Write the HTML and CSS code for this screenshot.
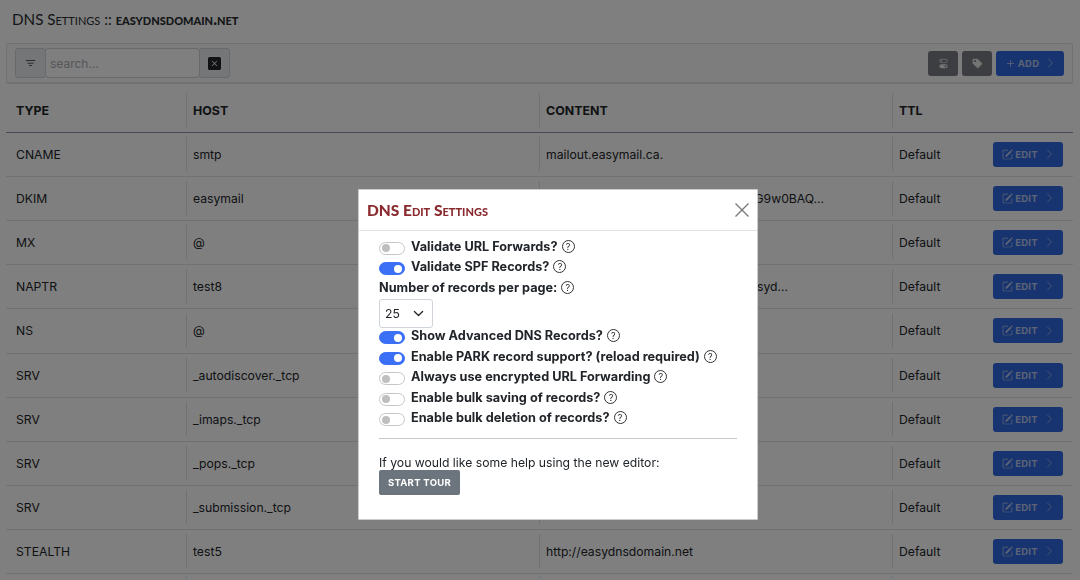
FILE: index.html
```html
<!DOCTYPE html>
<html lang="en">

<head>
    <meta charset="UTF-8">
    <title>DNS Settings</title>
    <link rel="stylesheet" href="styles.css">
</head>

<body>
    <h1 class="page-title">DNS Settings :: <b>easydnsdomain.net</b></h1>

    <div class="toolbar">
        <div class="search">
            <button class="search-filter">
                <svg width="13" height="13" viewBox="0 0 16 16" fill="currentColor"><path d="M6 10.5a.5.5 0 0 1 .5-.5h3a.5.5 0 0 1 0 1h-3a.5.5 0 0 1-.5-.5zm-2-3a.5.5 0 0 1 .5-.5h7a.5.5 0 0 1 0 1h-7a.5.5 0 0 1-.5-.5zm-2-3a.5.5 0 0 1 .5-.5h11a.5.5 0 0 1 0 1h-11a.5.5 0 0 1-.5-.5z"/></svg>
            </button>
            <input class="search-input" type="text" placeholder="search...">
            <button class="search-clear">
                <svg width="13" height="13" viewBox="0 0 16 16" fill="currentColor"><path d="M2 0a2 2 0 0 0-2 2v12a2 2 0 0 0 2 2h12a2 2 0 0 0 2-2V2a2 2 0 0 0-2-2H2zm3.35 4.65L8 7.29l2.65-2.64.7.7L8.71 8l2.64 2.65-.7.7L8 8.71l-2.65 2.64-.7-.7L7.29 8 4.65 5.35l.7-.7z"/></svg>
            </button>
        </div>
        <div class="actions">
            <button class="btn btn-dark">
                <svg width="11" height="11" viewBox="0 0 16 16" fill="currentColor"><path d="M5 1h6a3 3 0 0 1 0 6H5a3 3 0 0 1 0-6zm0 1a2 2 0 0 0 0 4h6a2 2 0 0 0 0-4H5zm0 1a1 1 0 1 1 0 2 1 1 0 0 1 0-2zM5 9h6a3 3 0 0 1 0 6H5a3 3 0 0 1 0-6zm6 4.5a1.5 1.5 0 1 0 0-3 1.5 1.5 0 0 0 0 3z"/></svg>
            </button>
            <button class="btn btn-dark">
                <svg width="11" height="11" viewBox="0 0 16 16" fill="currentColor"><path d="M1 2a1 1 0 0 1 1-1h5.6a1 1 0 0 1 .7.3l6.4 6.4a1 1 0 0 1 0 1.4l-5.6 5.6a1 1 0 0 1-1.4 0L1.3 8.3a1 1 0 0 1-.3-.7V2zm3.5 4a1.5 1.5 0 1 0 0-3 1.5 1.5 0 0 0 0 3z"/></svg>
            </button>
            <button class="btn btn-blue btn-add">
                <svg width="11" height="11" viewBox="0 0 16 16" fill="none" stroke="currentColor" stroke-width="1.2"><path d="M8 3v10M3 8h10"/></svg>
                <span>ADD</span>
                <svg class="chev" width="10" height="10" viewBox="0 0 16 16" fill="none" stroke="currentColor" stroke-width="1.4"><path d="M5 1l7 7-7 7"/></svg>
            </button>
        </div>
    </div>

    <table class="records">
        <thead>
            <tr><th class="col-type">TYPE</th><th class="col-host">HOST</th><th class="col-content">CONTENT</th><th>TTL</th><th class="col-edit"></th></tr>
        </thead>
        <tbody id="rows"></tbody>
    </table>

    <div class="backdrop"></div>

    <div class="modal">
        <div class="modal-head">
            <h2>DNS Edit Settings</h2>
            <svg class="modal-close" width="16" height="16" viewBox="0 0 16 16" fill="none" stroke="currentColor" stroke-width="1.3"><path d="M1.5 1.5l13 13M14.5 1.5l-13 13"/></svg>
        </div>
        <div class="modal-body">
            <div class="opt"><span class="switch"></span><label>Validate URL Forwards?</label><i class="help">?</i></div>
            <div class="opt"><span class="switch on"></span><label>Validate SPF Records?</label><i class="help">?</i></div>
            <div class="opt opt-plain"><label>Number of records per page:</label><i class="help">?</i></div>
            <div class="select">25
                <svg width="11" height="11" viewBox="0 0 16 16" fill="none" stroke="currentColor" stroke-width="1.8" stroke-linecap="round" stroke-linejoin="round"><path d="M2 5l6 6 6-6"/></svg>
            </div>
            <div class="opt"><span class="switch on"></span><label>Show Advanced DNS Records?</label><i class="help">?</i></div>
            <div class="opt"><span class="switch on"></span><label>Enable PARK record support? (reload required)</label><i class="help">?</i></div>
            <div class="opt"><span class="switch"></span><label>Always use encrypted URL Forwarding</label><i class="help">?</i></div>
            <div class="opt"><span class="switch"></span><label>Enable bulk saving of records?</label><i class="help">?</i></div>
            <div class="opt"><span class="switch"></span><label>Enable bulk deletion of records?</label><i class="help">?</i></div>
            <hr>
            <p class="tour-note">If you would like some help using the new editor:</p>
            <button class="tour">START TOUR</button>
        </div>
    </div>

    <script>
        const records = [
            ['CNAME', 'smtp', 'mailout.easymail.ca.'],
            ['DKIM', 'easymail', 'v=DKIM1; k=rsa; p=MIIBIjANBgkqhkiG9w0BAQ...'],
            ['MX', '@', ''],
            ['NAPTR', 'test8', '100 10 "S" "SIP+D2U" "" _sip._tcp.easyd...'],
            ['NS', '@', ''],
            ['SRV', '_autodiscover._tcp', ''],
            ['SRV', '_imaps._tcp', ''],
            ['SRV', '_pops._tcp', ''],
            ['SRV', '_submission._tcp', ''],
            ['STEALTH', 'test5', 'http://easydnsdomain.net']
        ];
        const editButton = `<button class="btn btn-blue btn-edit">
            <svg width="11" height="11" viewBox="0 0 16 16" fill="currentColor"><path d="M15.5 2.1a.5.5 0 0 1 0 .7l-1 1-2-2 1-1a.5.5 0 0 1 .7 0l1.3 1.3zM13.8 4.5l-2-2L5 9.3V11.3h2l6.8-6.8z"/><path d="M1 13.5A1.5 1.5 0 0 0 2.5 15h11a1.5 1.5 0 0 0 1.5-1.5v-6h-1v6a.5.5 0 0 1-.5.5h-11a.5.5 0 0 1-.5-.5v-11a.5.5 0 0 1 .5-.5H9V1H2.5A1.5 1.5 0 0 0 1 2.5v11z"/></svg>
            <span>EDIT</span>
            <svg class="chev" width="10" height="10" viewBox="0 0 16 16" fill="none" stroke="currentColor" stroke-width="1.4"><path d="M5 1l7 7-7 7"/></svg>
        </button>`;
        const tbody = document.getElementById('rows');
        records.forEach(r => {
            const tr = document.createElement('tr');
            tr.innerHTML = `<td>${r[0]}</td><td>${r[1]}</td><td>${r[2]}</td><td>Default</td><td class="col-edit">${editButton}</td>`;
            tbody.appendChild(tr);
        });
        // start of the next row, only its dividers show above the fold
        const more = document.createElement('tr');
        more.className = 'row-more';
        more.innerHTML = '<td></td><td></td><td></td><td></td><td class="col-edit"></td>';
        tbody.appendChild(more);
    </script>
</body>

</html>
```

FILE: styles.css
```css
html, body {
    height: 580px;
    overflow: hidden;
}

body {
    margin: 0;
    padding: 0 7px 0 6px;
    font-family: Inter, "Liberation Sans", sans-serif;
    font-size: 12.2px;
    color: #212529;
    background-color: #fff;
}

.page-title {
    margin: 0;
    padding: 10px 0 0 6px;
    height: 43px;
    box-sizing: border-box;
    font-family: Lato, sans-serif;
    font-variant: small-caps;
    font-weight: 400;
    font-size: 15.2px;
    line-height: 18px;
    color: #2a2d30;
}

.page-title b {
    font-weight: 900;
    font-size: 16px;
}

.toolbar {
    display: flex;
    justify-content: space-between;
    align-items: center;
    height: 41px;
    box-sizing: border-box;
    padding: 0 8px 0 8px;
    border: 1px solid #dee2e6;
    border-bottom-width: 2px;
    border-radius: 2px;
    background-color: #fbfbfb;
}

.search {
    display: flex;
    height: 30px;
}

.search-filter, .search-clear {
    width: 31px;
    padding: 0;
    display: flex;
    align-items: center;
    justify-content: center;
    background-color: #e9ecef;
    border: 1px solid #ced4da;
    border-radius: 3px;
    color: #212529;
}

.search-input {
    width: 155px;
    box-sizing: border-box;
    padding: 0 4px;
    margin: 0 -1px;
    border: 1px solid #ced4da;
    border-radius: 3px;
    font-family: Inter, sans-serif;
    font-size: 12px;
    background-color: #fff;
}

.search-input::placeholder {
    color: #a8adb3;
}

.actions {
    display: flex;
    gap: 4px;
}

.btn {
    display: inline-flex;
    align-items: center;
    justify-content: center;
    height: 25px;
    padding: 0;
    border: 0;
    border-radius: 3px;
    font-family: Inter, sans-serif;
    font-size: 9.5px;
    font-weight: 700;
    letter-spacing: .2px;
}

.btn-dark {
    width: 30px;
    background-color: #7a7d82;
    color: #e8e8e8;
}

.btn-blue {
    background-color: #3169e0;
    color: #b9c6ea;
}

.btn-add {
    width: 68px;
    gap: 2px;
}

.btn-edit {
    width: 70px;
    gap: 2px;
}

.chev {
    margin-left: 4px;
    opacity: .8;
}

.records {
    width: 100%;
    margin-top: 4px;
    border-collapse: collapse;
    table-layout: fixed;
}

.col-type { width: 181px; }
.col-host { width: 353px; }
.col-content { width: 353px; }
.col-edit { width: 90px; }

.records th {
    height: 44px;
    padding: 1px 0 0 10px;
    box-sizing: border-box;
    text-align: left;
    font-size: 12.4px;
    font-weight: 700;
    border-bottom: 1px solid #8f92a8;
    background:
        linear-gradient(#dee2e6, #dee2e6) right center / 1px 34px no-repeat;
}

.records td {
    height: 44px;
    padding: 0 0 0 6px;
    box-sizing: border-box;
    border-bottom: 1px solid #dee2e6;
    white-space: nowrap;
    background:
        linear-gradient(#dee2e6, #dee2e6) right center / 1px 34px no-repeat;
}

.records tr:nth-child(5) td {
    height: 45px;
}

.records tr.row-more td {
    height: 5px;
    border-bottom: 0;
    background-position: right bottom;
    background-size: 1px 2px;
}

.records td:first-child, .records th:first-child {
    padding-left: 10px;
}

.records th:nth-child(n+2) {
    padding-left: 6px;
}

.records th:nth-child(4), .records td:nth-child(4), .records th.col-edit, .records td.col-edit {
    background: none;
}

.records td.col-edit {
    padding: 0 10px 0 0;
    text-align: right;
}

.backdrop {
    position: fixed;
    inset: 0;
    background-color: rgba(0, 0, 0, .5);
}

.modal {
    position: fixed;
    left: 358px;
    top: 189px;
    width: 400px;
    height: 331px;
    box-sizing: border-box;
    background-color: #fff;
    border: 1px solid rgba(0, 0, 0, .2);
    border-radius: 1px;
}

.modal-head {
    display: flex;
    justify-content: space-between;
    align-items: center;
    height: 41px;
    box-sizing: border-box;
    padding: 0 7px 0 8px;
    border-bottom: 1px solid #dee2e6;
}

.modal-head h2 {
    margin: 0;
    font-family: Lato, sans-serif;
    font-variant: small-caps;
    font-weight: 900;
    font-size: 15.5px;
    color: #8a2b30;
}

.modal-close {
    color: #777;
}

.modal-body {
    padding: 5px 20px 0;
}

.opt {
    display: flex;
    align-items: center;
    height: 20.5px;
    font-size: 12.7px;
    font-weight: 700;
}

.switch {
    position: relative;
    width: 26px;
    height: 13px;
    box-sizing: border-box;
    margin: 4px 6px 0 0;
    border: 1px solid #c4c7ca;
    border-radius: 7px;
    background-color: #fff;
}

.switch::after {
    content: "";
    position: absolute;
    left: 2px;
    top: 1.5px;
    width: 8px;
    height: 8px;
    border-radius: 50%;
    background-color: #bfbfbf;
}

.switch.on {
    background-color: #3b6ff5;
    border-color: #3b6ff5;
}

.switch.on::after {
    left: 14px;
    background-color: #fff;
}

.help {
    width: 11px;
    height: 11px;
    margin-left: 4px;
    border: 1px solid #333;
    border-radius: 50%;
    font-style: normal;
    font-size: 9px;
    font-weight: 400;
    line-height: 11px;
    text-align: center;
}

.select {
    display: flex;
    justify-content: space-between;
    align-items: center;
    width: 54px;
    height: 29px;
    box-sizing: border-box;
    margin: 1px 0 -2px;
    padding: 0 8px 0 5px;
    border: 1px solid #ced4da;
    border-radius: 3px;
    font-size: 12.2px;
}

hr {
    margin: 10px 0 16px;
    border: 0;
    border-top: 1px solid #c8c8c8;
}

.tour-note {
    margin: 0;
    height: 15px;
    line-height: 15px;
}

.tour {
    display: block;
    width: 81px;
    height: 25px;
    padding: 0;
    border: 0;
    border-radius: 2px;
    background-color: #6c757d;
    color: #fff;
    font-family: Inter, sans-serif;
    font-size: 9.5px;
    font-weight: 700;
    letter-spacing: .3px;
}
```
